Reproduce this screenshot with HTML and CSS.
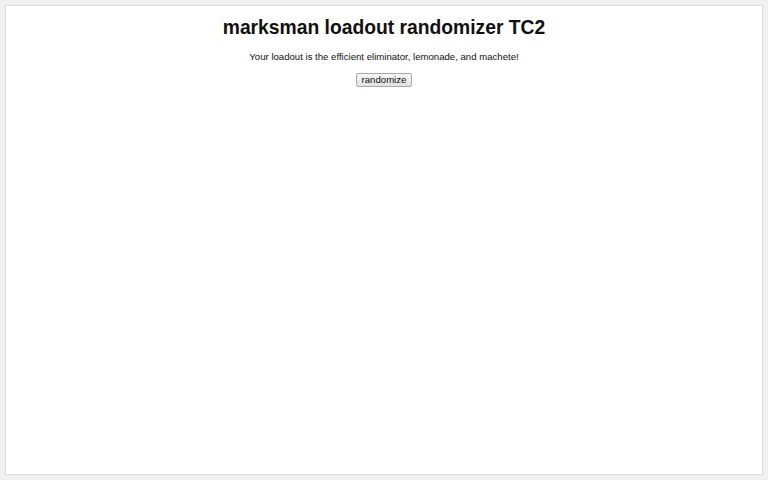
FILE: index.html
```html
<!DOCTYPE html>
<html lang="en">
<head>
    <meta charset="UTF-8">
    <meta name="viewport" content="width=device-width, initial-scale=1.0">
    <title>marksman loadout randomizer TC2</title>
    <link rel="stylesheet" href="styles.css">
</head>
<body>

    <div class="page">
        <h1 class="title">marksman loadout randomizer TC2</h1>
        <p id="loadout">Your loadout is the efficient eliminator, lemonade, and machete!</p>
        <button id="randomize">randomize</button>
    </div>

    <script>
        const primaries = ["efficient eliminator", "lucky shot", "ruined shot", "marksman rifle"];
        const secondaries = ["lemonade", "spyglass", "bandage", "flare"];
        const melees = ["machete", "knife", "crowbar", "bat"];

        const loadout = document.getElementById('loadout');
        const button = document.getElementById('randomize');

        function pick(list) {
            return list[Math.floor(Math.random() * list.length)];
        }

        button.addEventListener('click', () => {
            loadout.textContent = 'Your loadout is the ' + pick(primaries) + ', ' + pick(secondaries) + ', and ' + pick(melees) + '!';
        });
    </script>

</body>
</html>
```

FILE: styles.css
```css
body {
    margin: 0;
    padding: 5px;
    min-height: 100vh;
    box-sizing: border-box;
    background: #f1f1f1;
    font-family: 'Liberation Sans', Arial, sans-serif;
}

.page {
    background: #fff;
    border: 1px solid #dedede;
    min-height: calc(100vh - 10px);
    box-sizing: border-box;
    text-align: center;
    padding-top: 11px;
}

.title {
    margin: 0;
    font-size: 19.3px;
    font-weight: bold;
    color: #111;
}

#loadout {
    margin: 12px 0 7px;
    font-size: 9.6px;
    color: #111;
}

#randomize {
    font-family: 'Liberation Sans', Arial, sans-serif;
    font-size: 9.6px;
    color: #111;
    height: 14px;
    padding: 0 5px;
    background: linear-gradient(#f6f6f6, #e2e2e2);
    border: 1px solid #aaa;
    border-radius: 2px;
}
```
